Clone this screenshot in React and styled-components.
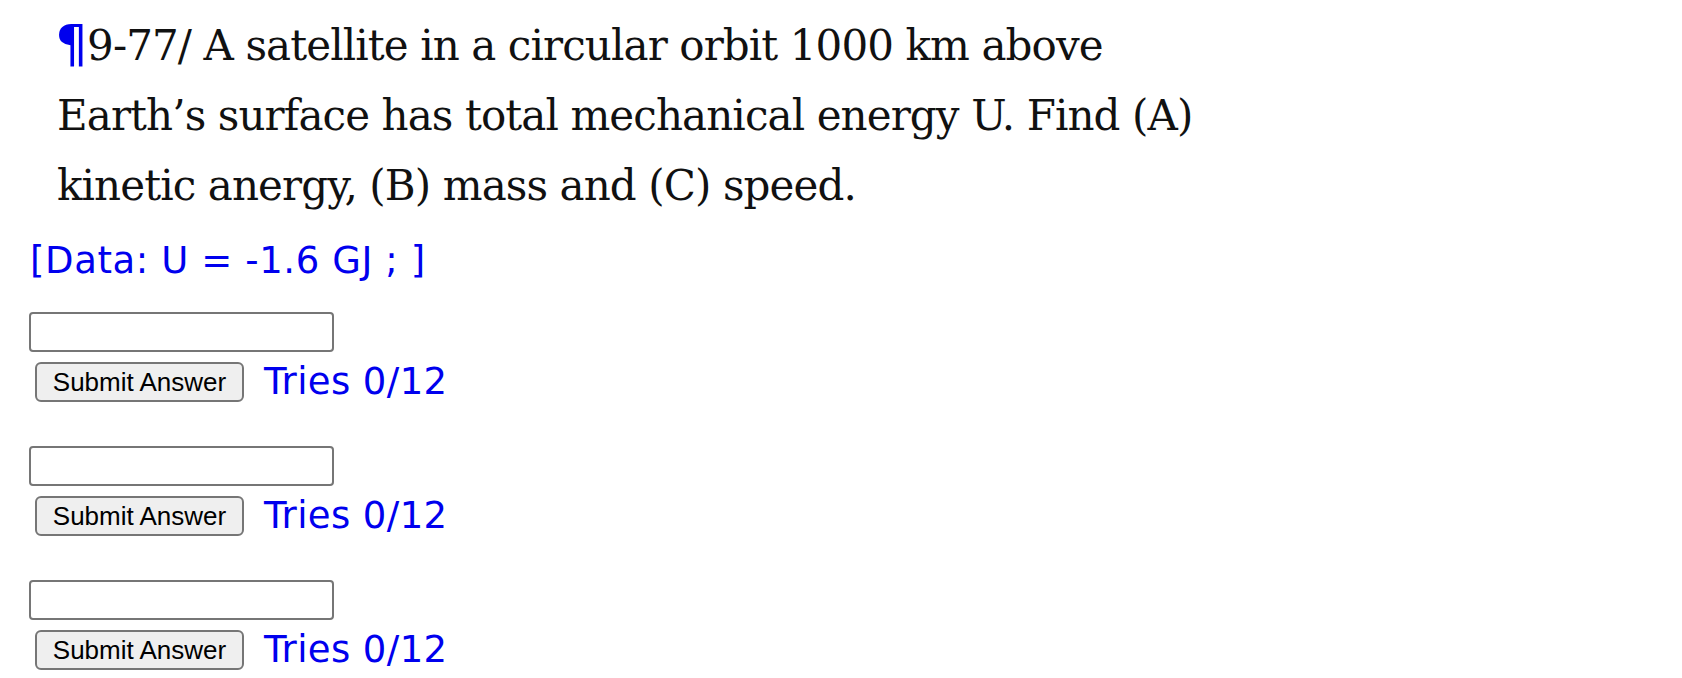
import React from "react";
import styled, { createGlobalStyle } from "styled-components";

const GlobalStyle = createGlobalStyle`
  html, body {
    margin: 0;
    padding: 0;
    background: #fff;
  }
`;

const Page = styled.div`
  padding: 0 0 0 29px;
`;

const Question = styled.p`
  margin: 0;
  padding: 11px 0 0 28px;
  width: 1160px;
  font-family: "DejaVu Serif", "Liberation Serif", serif;
  font-size: 42px;
  line-height: 70px;
  letter-spacing: -0.9px;
  color: #111;
`;

const Pilcrow = styled.span`
  font-family: "DejaVu Sans", sans-serif;
  color: #0000ee;
  font-size: 52px;
  line-height: 1;
  letter-spacing: 0;
  margin: 0 -1px 0 -2px;
  vertical-align: -2px;
`;

const Data = styled.div`
  margin: 18px 0 0 1px;
  font-family: "DejaVu Sans", Verdana, sans-serif;
  font-size: 37px;
  letter-spacing: 0.6px;
  line-height: 44px;
  color: #0000ee;
`;

const AnswerList = styled.div`
  display: flex;
  flex-direction: column;
  gap: 44px;
  margin-top: 29px;
`;

const Answer = styled.div`
  display: flex;
  flex-direction: column;
  gap: 10px;
`;

const Field = styled.input`
  box-sizing: border-box;
  width: 305px;
  height: 40px;
  margin: 0;
  border: 2px solid #767676;
  border-radius: 4px;
  background: #fff;
  font-size: 26px;
  padding: 2px 6px;
`;

const Row = styled.div`
  display: flex;
  align-items: center;
  gap: 20px;
  height: 40px;
  padding-left: 6px;
`;

const SubmitButton = styled.button`
  box-sizing: border-box;
  width: 209px;
  height: 40px;
  margin: 0;
  padding: 0;
  border: 2px solid #767676;
  border-radius: 6px;
  background: #efefef;
  font-family: "Liberation Sans", Arial, sans-serif;
  font-size: 26px;
  color: #000;
`;

const Tries = styled.span`
  font-family: "DejaVu Sans", Verdana, sans-serif;
  font-size: 37px;
  line-height: 40px;
  letter-spacing: 0.4px;
  color: #0000ee;
`;

export default function App() {
  const answers = [0, 1, 2];
  return (
    <Page>
      <GlobalStyle />
      <Question>
        <Pilcrow>¶</Pilcrow>9-77/ A satellite in a circular orbit 1000 km above
        Earth’s surface has total mechanical energy U. Find (A) kinetic anergy,
        (B) mass and (C) speed.
      </Question>
      <Data>[Data: U = -1.6 GJ ; ]</Data>
      <AnswerList>
        {answers.map((i) => (
          <Answer key={i}>
            <Field type="text" />
            <Row>
              <SubmitButton>Submit Answer</SubmitButton>
              <Tries>Tries 0/12</Tries>
            </Row>
          </Answer>
        ))}
      </AnswerList>
    </Page>
  );
}
